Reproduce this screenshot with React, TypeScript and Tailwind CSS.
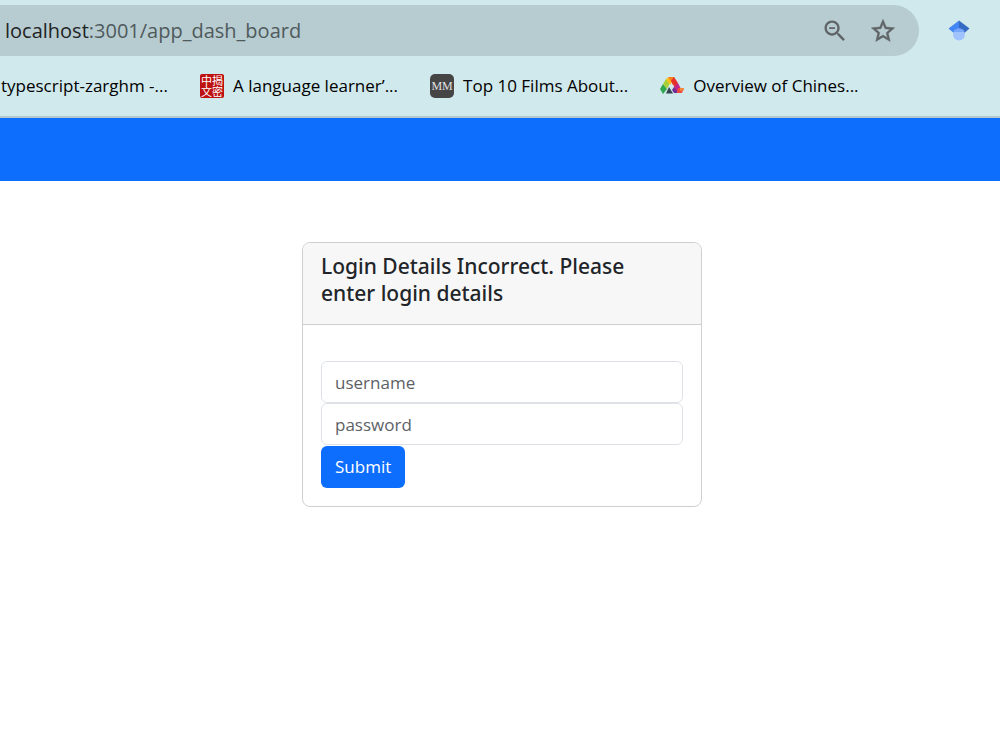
import type { ReactNode } from "react";

function ZoomOutIcon() {
  return (
    <svg viewBox="0 0 24 24" className="w-7 h-7" fill="#5f6467" aria-hidden="true">
      <path d="M15.5 14h-.79l-.28-.27C15.41 12.59 16 11.11 16 9.5 16 5.91 13.09 3 9.5 3S3 5.91 3 9.5 5.91 16 9.5 16c1.61 0 3.09-.59 4.23-1.57l.27.28v.79l5 4.99L20.49 19l-4.99-5zm-6 0C7.01 14 5 11.99 5 9.5S7.01 5 9.5 5 14 7.01 14 9.5 11.99 14 9.5 14zM7 8.7h5v1.5H7z" />
    </svg>
  );
}

function StarIcon() {
  return (
    <svg viewBox="0 0 24 24" className="w-7 h-7" fill="#5f6467" stroke="#5f6467" strokeWidth="0.4" aria-hidden="true">
      <path d="M22 9.24l-7.19-.62L12 2 9.19 8.63 2 9.24l5.46 4.73L5.82 21 12 17.27 18.18 21l-1.63-7.03L22 9.24zM12 15.4l-3.76 2.27 1-4.28-3.32-2.88 4.38-.38L12 6.1l1.71 4.04 4.38.38-3.32 2.88 1 4.28L12 15.4z" />
    </svg>
  );
}

function ScholarIcon() {
  return (
    <svg viewBox="0 0 24 24" className="w-6 h-6" aria-hidden="true">
      <path d="M12 1.5 1.5 9.5 7 14.2h5z" fill="#4285f4" />
      <path d="M12 1.5 22.5 9.5 17 14.2h-5z" fill="#356ac3" />
      <circle cx="12" cy="15.5" r="6" fill="#a0c3ff" />
      <path d="M6.6 12.9a6 6 0 0 1 10.8 0z" fill="#76a7fa" />
    </svg>
  );
}

function RainbowIcon() {
  return (
    <svg viewBox="0 0 24 24" className="w-6 h-6" aria-hidden="true">
      <path d="M3 10 0 15l3 5 4-5z" fill="#2fa84f" />
      <path d="M3 10l3-5 4 4-3 6z" fill="#a9cf38" />
      <path d="M6 5l3-2 4 3-3 5z" fill="#fbc21b" />
      <path d="M8 3h6l2 4-3 4z" fill="#f5821f" />
      <path d="M14 3l4 6-3 5-4-7z" fill="#e6302b" />
      <path d="M18 9l3 6-5 4-2-6z" fill="#c2268c" />
      <path d="M14 13l4 6h-4l-2-3z" fill="#6b2f92" />
      <path d="M18 14h6l-2 5h-5z" fill="#ef4b3a" />
      <path d="M20 14h4v2l-4 1z" fill="#f58a3c" />
      <path d="M9 13l4 6.5H6z" fill="#344450" />
    </svg>
  );
}

function Bookmark({ icon, label }: { icon?: ReactNode; label: string }) {
  return (
    <a href="#" className="flex items-center gap-[9px] whitespace-nowrap">
      {icon}
      <span>{label}</span>
    </a>
  );
}

function BrowserBar() {
  return (
    <header className="bg-[#d0e9ec] border-b-2 border-[#b4c9cc] pt-[5px] text-black">
      <div className="flex items-center pr-[29px]">
        <div className="flex flex-1 items-center justify-between h-[51px] pl-[5px] pr-[22px] rounded-r-full bg-[#b7ccd0]">
          <span className="text-[20px] text-[#4f5a5d]">
            <span className="text-[#1f2426]">localhost</span>:3001/app_dash_board
          </span>
          <div className="flex gap-5">
            <button type="button" aria-label="Zoom">
              <ZoomOutIcon />
            </button>
            <button type="button" aria-label="Bookmark this tab">
              <StarIcon />
            </button>
          </div>
        </div>
        <button type="button" aria-label="Scholar" className="ml-7">
          <ScholarIcon />
        </button>
      </div>

      <nav className="flex items-center gap-8 h-[60px] pl-px text-[17px]">
        <Bookmark label="typescript-zarghm -..." />
        <Bookmark
          label="A language learner’..."
          icon={
            <span className="w-6 h-6 p-px rounded-xs bg-[#bd1111] text-white text-[11px] leading-[11px] whitespace-normal font-['Noto_Sans_CJK_SC',sans-serif]">
              中揭文密
            </span>
          }
        />
        <Bookmark
          label="Top 10 Films About..."
          icon={
            <span className="flex items-center justify-center w-6 h-6 rounded-[5px] bg-[#454545] text-[#e0e0e0] text-[12px] font-['Liberation_Serif',serif]">
              MM
            </span>
          }
        />
        <Bookmark label="Overview of Chines..." icon={<RainbowIcon />} />
      </nav>
    </header>
  );
}

const inputClass =
  "block w-full h-[42px] px-[13px] bg-white border border-[#dee2e6] rounded-md text-[#212529] placeholder:text-[#5c6166] outline-none";

function LoginCard() {
  return (
    <section className="w-full max-w-[400px] rounded-lg border border-[#cfcfcf] bg-white overflow-hidden">
      <div className="px-[18px] pt-[10px] pb-[17px] bg-[#f7f7f7] border-b border-[#cfcfcf]">
        <h1 className="text-[21px] leading-[27px] font-medium font-['Noto_Sans','Open_Sans',sans-serif]">
          Login Details Incorrect. Please enter login details
        </h1>
      </div>
      <form className="px-[18px] pt-9 pb-[18px] text-[17px]" onSubmit={(e) => e.preventDefault()}>
        <input type="text" name="username" aria-label="username" placeholder="username" className={inputClass} />
        <input type="password" name="password" aria-label="password" placeholder="password" className={inputClass} />
        <button type="submit" className="mt-px h-[42px] px-[14px] rounded-md bg-[#0d6efd] text-white">
          Submit
        </button>
      </form>
    </section>
  );
}

export default function App() {
  return (
    <div className="min-h-screen bg-white text-[#212529] font-['Open_Sans','Noto_Sans',sans-serif]">
      <BrowserBar />
      <div className="h-[63px] bg-[#0d6efd]" />
      <main className="flex justify-center pt-[61px] pl-1">
        <LoginCard />
      </main>
    </div>
  );
}
